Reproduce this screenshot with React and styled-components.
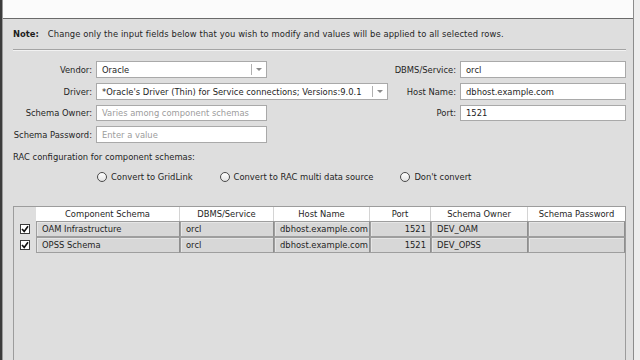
import React from "react";
import styled, { createGlobalStyle } from "styled-components";

const Global = createGlobalStyle`
  html, body { margin: 0; padding: 0; background: #dedede; }
  body { font-family: "DejaVu Sans", "Liberation Sans", sans-serif; font-size: 8.4px; color: #1e1e1e; }
  * { box-sizing: border-box; }
`;

const Window = styled.div`
  width: 640px;
  height: 360px;
  display: flex;
  overflow: hidden;
`;

const LeftEdge = styled.div`
  width: 3px;
  background: #3c3c3c;
  border-right: 1px solid #9a9a9a;
`;

const RightEdge = styled.div`
  width: 7px;
  background: #ededed;
  border-left: 1px solid #8c8c8c;
`;

const Main = styled.div`
  flex: 1;
  display: flex;
  flex-direction: column;
`;

const TopStrip = styled.div`
  height: 19px;
  background: #fbfbfb;
  border-bottom: 1px solid #6a6a6a;
`;

const Panel = styled.div`
  flex: 1;
  background: #dedede;
  padding: 9px 7px 0 10px;
  display: flex;
  flex-direction: column;
`;

const NoteRow = styled.div`
  height: 12px;
  line-height: 12px;
  white-space: nowrap;
  display: flex;
  gap: 9px;
`;

const NoteText = styled.span`
  letter-spacing: 0.1px;
`;

const Bold = styled.span`
  font-weight: bold;
`;

const Separator = styled.div`
  margin-top: 9px;
  height: 2px;
  border-top: 1px solid #a4a4a4;
  border-bottom: 1px solid #f2f2f2;
`;

const FormGrid = styled.div`
  margin-top: 10px;
  display: grid;
  grid-template-columns: 79px 292px 1fr 166px;
  grid-template-rows: 17px 17px 16px 17px;
  column-gap: 4px;
  row-gap: 5px;
  align-items: center;
`;

const Label = styled.div`
  text-align: right;
  white-space: nowrap;
  grid-column: ${(p) => p.$col};
`;

const fieldBase = `
  height: 17px;
  background: #fff;
  border: 1px solid #a9a9a9;
  display: flex;
  align-items: center;
  padding-left: 5px;
  white-space: nowrap;
  overflow: hidden;
`;

const Field = styled.div`
  ${fieldBase}
  height: ${(p) => (p.$short ? "16px" : "17px")};
  width: ${(p) => p.$w || "100%"};
  color: ${(p) => (p.$placeholder ? "#9c9c9c" : "#1e1e1e")};
  grid-column: ${(p) => p.$col};
`;

const Combo = styled.div`
  ${fieldBase}
  padding-left: 0;
  width: ${(p) => p.$w};
  grid-column: ${(p) => p.$col};
`;

const ComboText = styled.div`
  flex: 1;
  padding-left: 5px;
  overflow: hidden;
`;

const ComboArrow = styled.div`
  width: 15px;
  height: 11px;
  border-left: 1px solid #b0b0b0;
  display: flex;
  align-items: center;
  justify-content: center;
`;

const Triangle = styled.div`
  width: 0;
  height: 0;
  border-left: 3px solid transparent;
  border-right: 3px solid transparent;
  border-top: 3px solid #8a8a8a;
`;

const RacLabel = styled.div`
  margin-top: 8px;
  height: 12px;
  line-height: 12px;
`;

const RadioRow = styled.div`
  margin-top: 8px;
  height: 12px;
  display: flex;
  align-items: center;
  gap: 27px;
  padding-left: 84px;
`;

const RadioItem = styled.label`
  display: flex;
  align-items: center;
  gap: 4px;
  white-space: nowrap;
`;

const RadioCircle = styled.span`
  width: 10px;
  height: 10px;
  border-radius: 50%;
  border: 1px solid #4a4a4a;
  background: linear-gradient(#ffffff, #e4e4e4);
`;

const Table = styled.div`
  margin-top: 23px;
  flex: 1;
  border: 1px solid #9c9c9c;
  border-bottom: none;
  display: flex;
  flex-direction: column;
`;

const cols = "22px 144px 94px 96px 61px 97px 1fr";

const HeaderRow = styled.div`
  display: grid;
  grid-template-columns: ${cols};
  height: 14px;
`;

const HeaderCell = styled.div`
  background: ${(p) => (p.$blank ? "#dedede" : "#ffffff")};
  border-right: 1px solid ${(p) => (p.$blank ? "#dedede" : "#d4d4d4")};
  text-align: center;
  line-height: 14px;
  white-space: nowrap;
  overflow: hidden;
  &:last-child { border-right: none; }
`;

const DataRow = styled.div`
  display: grid;
  grid-template-columns: ${cols};
  height: 16px;
`;

const CheckCell = styled.div`
  display: flex;
  align-items: center;
  justify-content: center;
`;

const CheckBox = styled.span`
  width: 10px;
  height: 10px;
  background: #fff;
  border: 1px solid #3a3a3a;
  display: flex;
  align-items: center;
  justify-content: center;
`;

const Cell = styled.div`
  background: #d7d7d7;
  border: 1px solid #9e9e9e;
  border-right-color: #8e8e8e;
  box-shadow: inset 1px 1px 0 #e6e6e6;
  line-height: 14px;
  padding: 0 ${(p) => (p.$right ? "4px" : "5px")};
  text-align: ${(p) => (p.$right ? "right" : "left")};
  white-space: nowrap;
  overflow: hidden;
`;

const rows = [
  ["OAM Infrastructure", "orcl", "dbhost.example.com", "1521", "DEV_OAM", ""],
  ["OPSS Schema", "orcl", "dbhost.example.com", "1521", "DEV_OPSS", ""],
];

const Check = () => (
  <svg width="8" height="8" viewBox="0 0 8 8">
    <path d="M1 4 L3.2 6.4 L7 1.2" fill="none" stroke="#111" strokeWidth="1.6" />
  </svg>
);

export default function App() {
  return (
    <>
      <Global />
      <Window>
        <LeftEdge />
        <Main>
          <TopStrip />
          <Panel>
            <NoteRow>
              <Bold>Note:</Bold>
              <NoteText>
                Change only the input fields below that you wish to modify and values will be applied to all selected rows.
              </NoteText>
            </NoteRow>
            <Separator />
            <FormGrid>
              <Label $col="1">Vendor:</Label>
              <Combo $w="171px" $col="2">
                <ComboText>Oracle</ComboText>
                <ComboArrow><Triangle /></ComboArrow>
              </Combo>
              <Label $col="3">DBMS/Service:</Label>
              <Field $col="4">orcl</Field>

              <Label $col="1">Driver:</Label>
              <Combo $w="292px" $col="2">
                <ComboText>*Oracle's Driver (Thin) for Service connections; Versions:9.0.1</ComboText>
                <ComboArrow><Triangle /></ComboArrow>
              </Combo>
              <Label $col="3">Host Name:</Label>
              <Field $col="4">dbhost.example.com</Field>

              <Label $col="1">Schema Owner:</Label>
              <Field $col="2" $w="171px" $short $placeholder>Varies among component schemas</Field>
              <Label $col="3">Port:</Label>
              <Field $col="4" $short>1521</Field>

              <Label $col="1">Schema Password:</Label>
              <Field $col="2" $w="171px" $placeholder>Enter a value</Field>
            </FormGrid>
            <RacLabel>RAC configuration for component schemas:</RacLabel>
            <RadioRow>
              <RadioItem><RadioCircle />Convert to GridLink</RadioItem>
              <RadioItem><RadioCircle />Convert to RAC multi data source</RadioItem>
              <RadioItem><RadioCircle />Don't convert</RadioItem>
            </RadioRow>
            <Table>
              <HeaderRow>
                <HeaderCell $blank />
                <HeaderCell>Component Schema</HeaderCell>
                <HeaderCell>DBMS/Service</HeaderCell>
                <HeaderCell>Host Name</HeaderCell>
                <HeaderCell>Port</HeaderCell>
                <HeaderCell>Schema Owner</HeaderCell>
                <HeaderCell>Schema Password</HeaderCell>
              </HeaderRow>
              {rows.map((r, i) => (
                <DataRow key={i}>
                  <CheckCell>
                    <CheckBox><Check /></CheckBox>
                  </CheckCell>
                  {r.map((v, j) => (
                    <Cell key={j} $right={j === 3}>{v}</Cell>
                  ))}
                </DataRow>
              ))}
            </Table>
          </Panel>
        </Main>
        <RightEdge />
      </Window>
    </>
  );
}
